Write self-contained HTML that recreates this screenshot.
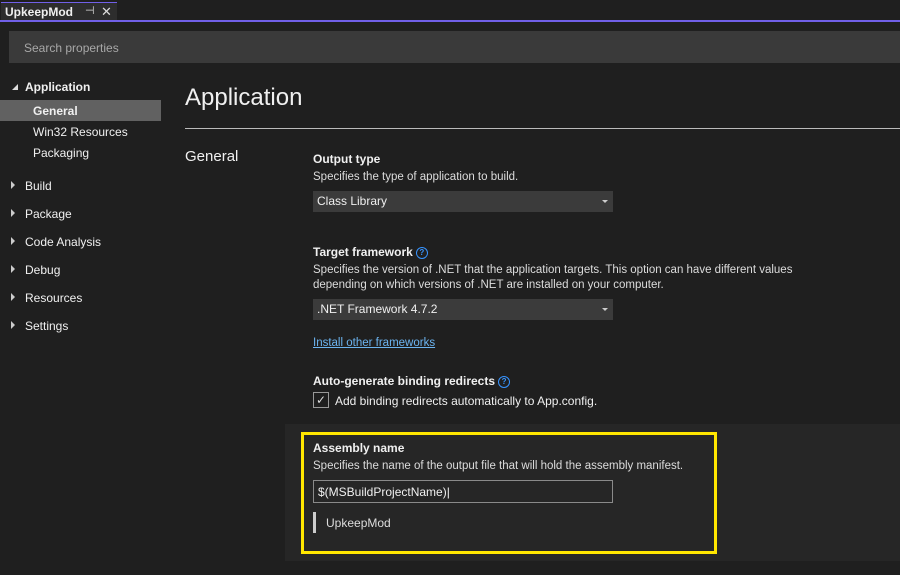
<!DOCTYPE html>
<html><head><style>
body{margin:0;width:900px;height:575px;background:#1f1f1f;color:#f0f0f0;font-family:"Liberation Sans",sans-serif;font-size:12px;position:relative;overflow:hidden}
.a{position:absolute;white-space:nowrap}
.b{font-weight:bold}
.desc{color:#dcdcdc;font-size:11.5px}
.dd{position:absolute;left:313px;width:300px;height:21px;background:#3b3b3b;}
.dd span{position:absolute;left:4px;top:3px}
.dd i{position:absolute;right:5px;top:9px;border-left:3px solid transparent;border-right:3px solid transparent;border-top:3px solid #ccc}
.q{display:inline-block;width:10px;height:10px;border:1px solid #3794ff;border-radius:50%;color:#3794ff;font-size:8px;text-align:center;line-height:10px;vertical-align:1px;margin-left:3px}
.tri{position:absolute;left:11px;width:0;height:0;border-top:4px solid transparent;border-bottom:4px solid transparent;border-left:4px solid #ccc}
</style></head><body>
<div class="a" style="left:0;top:0;width:900px;height:22px;background:#1f1f1f"></div>
<div class="a" style="left:1px;top:2px;width:116px;height:19px;background:#2d2d2d;border-top:1px solid #7160e8"></div>
<div class="a b" style="left:5px;top:5px;font-size:12px">UpkeepMod</div>
<div class="a" style="left:85px;top:4px;font-size:11px;color:#ddd">⊣</div>
<div class="a" style="left:101px;top:4px;font-size:13px;color:#ddd">✕</div>
<div class="a" style="left:0;top:20px;width:900px;height:2px;background:#7160e8"></div>
<div class="a" style="left:9px;top:31px;width:891px;height:32px;background:#3a3a3a"></div>
<div class="a" style="left:24px;top:41px;color:#a8a8a8">Search properties</div>

<div class="a" style="left:12px;top:84px;width:0;height:0;border-left:6px solid transparent;border-bottom:6px solid #ddd"></div>
<div class="a b" style="left:25px;top:80px">Application</div>
<div class="a" style="left:0;top:100px;width:161px;height:21px;background:#616161"></div>
<div class="a b" style="left:33px;top:104px">General</div>
<div class="a" style="left:33px;top:125px">Win32 Resources</div>
<div class="a" style="left:33px;top:146px">Packaging</div>
<div class="tri" style="top:181px"></div><div class="a" style="left:25px;top:179px">Build</div>
<div class="tri" style="top:209px"></div><div class="a" style="left:25px;top:207px">Package</div>
<div class="tri" style="top:237px"></div><div class="a" style="left:25px;top:235px">Code Analysis</div>
<div class="tri" style="top:265px"></div><div class="a" style="left:25px;top:263px">Debug</div>
<div class="tri" style="top:293px"></div><div class="a" style="left:25px;top:291px">Resources</div>
<div class="tri" style="top:321px"></div><div class="a" style="left:25px;top:319px">Settings</div>

<div class="a" style="left:185px;top:84px;font-size:24px">Application</div>
<div class="a" style="left:185px;top:128px;width:715px;height:1px;background:#bbb"></div>
<div class="a" style="left:185px;top:148px;font-size:15px">General</div>

<div class="a b" style="left:313px;top:152px">Output type</div>
<div class="a desc" style="left:313px;top:171px">Specifies the type of application to build.</div>
<div class="dd" style="top:191px"><span>Class Library</span><i></i></div>

<div class="a b" style="left:313px;top:245px">Target framework<span class="q">?</span></div>
<div class="a desc" style="left:313px;top:264px">Specifies the version of .NET that the application targets. This option can have different values</div>
<div class="a desc" style="left:313px;top:279px">depending on which versions of .NET are installed on your computer.</div>
<div class="dd" style="top:299px"><span>.NET Framework 4.7.2</span><i></i></div>
<div class="a desc" style="left:313px;top:337px;color:#6cb4f0;text-decoration:underline">Install other frameworks</div>

<div class="a b" style="left:313px;top:374px">Auto-generate binding redirects<span class="q">?</span></div>
<div class="a" style="left:313px;top:392px;width:16px;height:16px;border:1px solid #999;box-sizing:border-box;color:#ddd;font-size:12px;text-align:center;line-height:15px">✓</div>
<div class="a" style="left:335px;top:394px">Add binding redirects automatically to App.config.</div>

<div class="a" style="left:285px;top:424px;width:615px;height:137px;background:#262626"></div>
<div class="a" style="left:301px;top:432px;width:410px;height:116px;border:3px solid #ffe600"></div>
<div class="a b" style="left:313px;top:441px">Assembly name</div>
<div class="a desc" style="left:313px;top:460px">Specifies the name of the output file that will hold the assembly manifest.</div>
<div class="a" style="left:313px;top:480px;width:300px;height:23px;border:1px solid #8a8a8a;box-sizing:border-box"></div>
<div class="a" style="left:318px;top:485px">$(MSBuildProjectName)|</div>
<div class="a" style="left:313px;top:512px;width:3px;height:21px;background:#ccc"></div>
<div class="a" style="left:326px;top:516px;color:#ddd">UpkeepMod</div>
</body></html>
